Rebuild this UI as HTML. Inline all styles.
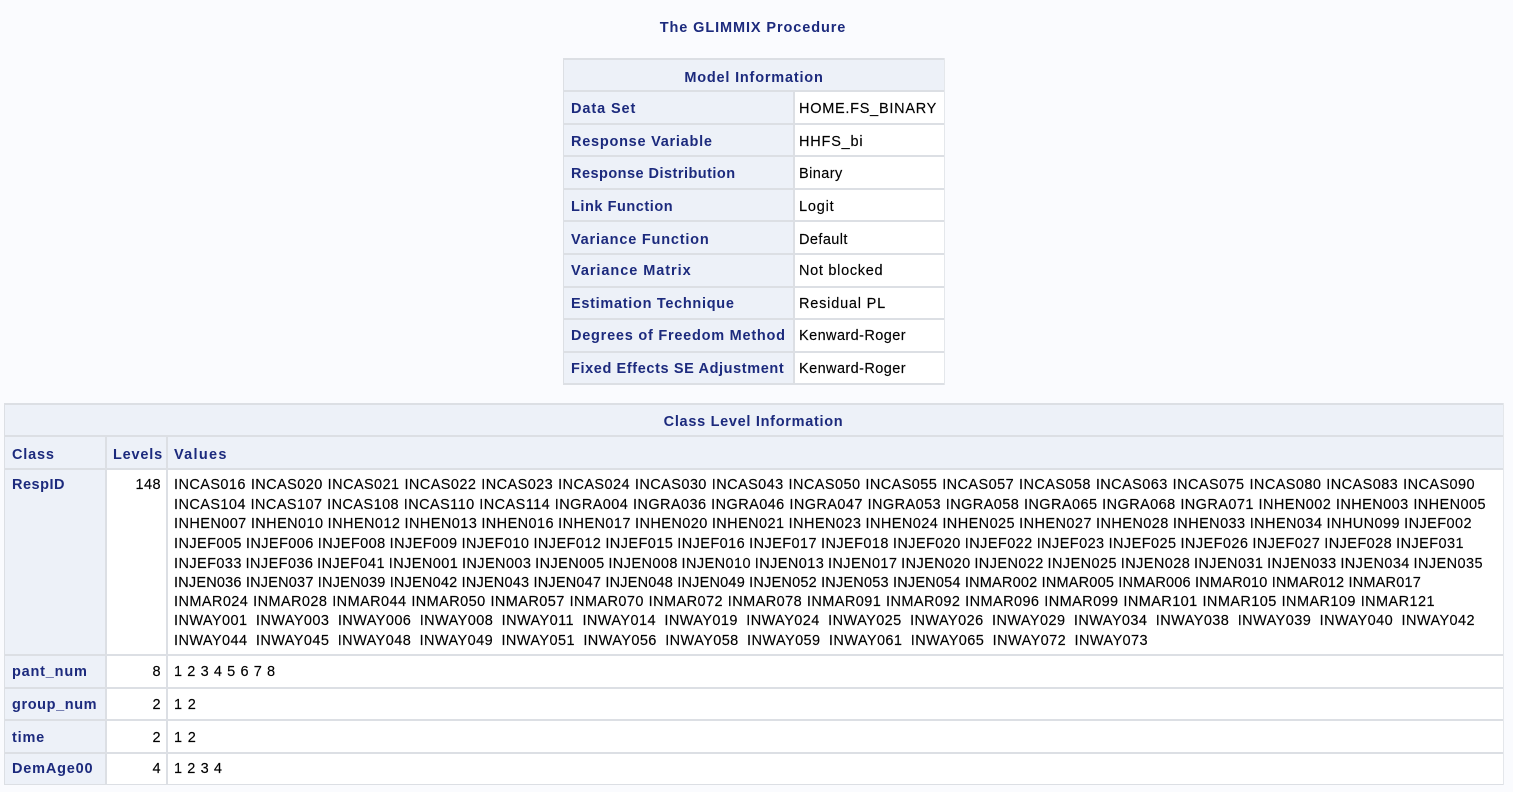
<!DOCTYPE html>
<html><head><meta charset="utf-8"><style>
html,body{margin:0;padding:0}
body{width:1513px;height:792px;position:relative;overflow:hidden;background:#fafbfe;font-family:"Liberation Sans",Arial,sans-serif}
.b{position:absolute}
.t{position:absolute;white-space:nowrap;font-size:14.5px;line-height:18px;height:18px;color:#000;letter-spacing:.42px;filter:blur(.35px);-webkit-text-stroke:.15px #000}
.h{font-weight:bold;color:#1c2a7d;font-size:14.5px;letter-spacing:.8px;-webkit-text-stroke:0}
.j{text-align:justify;text-align-last:justify;white-space:normal;word-spacing:-1px;letter-spacing:.42px}
.r{text-align:right}
.c{text-align:center}
.hd{background:#edf1f8}
.w{background:#fff}
.ln{background:#dcdfe4}
.lt{background:#e4e7eb}
</style></head><body>
<div class="t h c" style="left:553px;width:400px;top:19px;letter-spacing:.9px">The GLIMMIX Procedure</div>

<div class="b hd" style="left:563px;top:58px;width:381px;height:326px"></div>
<div class="b w" style="left:794px;top:91px;width:150px;height:293px"></div>
<div class="b ln" style="left:563px;top:58px;width:382px;height:2px"></div>
<div class="b ln" style="left:563px;top:90px;width:381px;height:2px"></div>
<div class="b ln" style="left:563px;top:123px;width:381px;height:2px"></div>
<div class="b ln" style="left:563px;top:155px;width:381px;height:2px"></div>
<div class="b ln" style="left:563px;top:188px;width:381px;height:2px"></div>
<div class="b ln" style="left:563px;top:220px;width:381px;height:2px"></div>
<div class="b ln" style="left:563px;top:253px;width:381px;height:2px"></div>
<div class="b ln" style="left:563px;top:286px;width:381px;height:2px"></div>
<div class="b ln" style="left:563px;top:318px;width:381px;height:2px"></div>
<div class="b ln" style="left:563px;top:351px;width:381px;height:2px"></div>
<div class="b ln" style="left:563px;top:383px;width:382px;height:2px"></div>
<div class="b ln" style="left:563px;top:58px;width:1px;height:327px"></div>
<div class="b ln" style="left:793px;top:91px;width:2px;height:293px"></div>
<div class="b lt" style="left:944px;top:58px;width:1px;height:327px"></div>

<div class="t h c" style="left:565px;width:378px;top:69px">Model Information</div>
<div class="t h" style="left:571px;top:100px;letter-spacing:.9px">Data Set</div><div class="t" style="left:799px;top:100px;letter-spacing:.73px">HOME.FS_BINARY</div>
<div class="t h" style="left:571px;top:133px;letter-spacing:.75px">Response Variable</div><div class="t" style="left:799px;top:133px;letter-spacing:.8px">HHFS_bi</div>
<div class="t h" style="left:571px;top:165px;letter-spacing:.47px">Response Distribution</div><div class="t" style="left:799px;top:165px">Binary</div>
<div class="t h" style="left:571px;top:198px;letter-spacing:.55px">Link Function</div><div class="t" style="left:799px;top:198px;letter-spacing:.8px">Logit</div>
<div class="t h" style="left:571px;top:231px">Variance Function</div><div class="t" style="left:799px;top:231px">Default</div>
<div class="t h" style="left:571px;top:262px;letter-spacing:.95px">Variance Matrix</div><div class="t" style="left:799px;top:262px;letter-spacing:.7px">Not blocked</div>
<div class="t h" style="left:571px;top:295px;letter-spacing:.7px">Estimation Technique</div><div class="t" style="left:799px;top:295px;letter-spacing:.8px">Residual PL</div>
<div class="t h" style="left:571px;top:327px;letter-spacing:.76px">Degrees of Freedom Method</div><div class="t" style="left:799px;top:327px">Kenward-Roger</div>
<div class="t h" style="left:571px;top:360px;letter-spacing:.61px">Fixed Effects SE Adjustment</div><div class="t" style="left:799px;top:360px">Kenward-Roger</div>

<div class="b hd" style="left:4px;top:404px;width:1499px;height:381px"></div>
<div class="b w" style="left:106px;top:470px;width:1397px;height:315px"></div>
<div class="b ln" style="left:4px;top:403px;width:1500px;height:2px"></div>
<div class="b ln" style="left:4px;top:435px;width:1499px;height:2px"></div>
<div class="b ln" style="left:4px;top:468px;width:1499px;height:2px"></div>
<div class="b ln" style="left:4px;top:654px;width:1499px;height:2px"></div>
<div class="b ln" style="left:4px;top:687px;width:1499px;height:2px"></div>
<div class="b ln" style="left:4px;top:719px;width:1499px;height:2px"></div>
<div class="b ln" style="left:4px;top:752px;width:1499px;height:2px"></div>
<div class="b ln" style="left:4px;top:784px;width:1500px;height:1px"></div>
<div class="b ln" style="left:4px;top:403px;width:1px;height:382px"></div>
<div class="b ln" style="left:105px;top:436px;width:2px;height:349px"></div>
<div class="b ln" style="left:166px;top:436px;width:2px;height:349px"></div>
<div class="b lt" style="left:1503px;top:403px;width:1px;height:382px"></div>

<div class="t h c" style="left:4px;width:1499px;top:413px;letter-spacing:.7px">Class Level Information</div>
<div class="t h" style="left:12px;top:446px">Class</div>
<div class="t h" style="left:113px;top:446px">Levels</div>
<div class="t h" style="left:174px;top:446px;letter-spacing:1.3px">Values</div>
<div class="t h" style="left:12px;top:476px;letter-spacing:.5px">RespID</div>
<div class="t r" style="left:110px;width:51px;top:476px">148</div>

<div class="t j" style="left:174px;top:476px;width:1301px">INCAS016 INCAS020 INCAS021 INCAS022 INCAS023 INCAS024 INCAS030 INCAS043 INCAS050 INCAS055 INCAS057 INCAS058 INCAS063 INCAS075 INCAS080 INCAS083 INCAS090</div>
<div class="t j" style="left:174px;top:496px;width:1312px">INCAS104 INCAS107 INCAS108 INCAS110 INCAS114 INGRA004 INGRA036 INGRA046 INGRA047 INGRA053 INGRA058 INGRA065 INGRA068 INGRA071 INHEN002 INHEN003 INHEN005</div>
<div class="t j" style="left:174px;top:515px;width:1298px">INHEN007 INHEN010 INHEN012 INHEN013 INHEN016 INHEN017 INHEN020 INHEN021 INHEN023 INHEN024 INHEN025 INHEN027 INHEN028 INHEN033 INHEN034 INHUN099 INJEF002</div>
<div class="t j" style="left:174px;top:535px;width:1290px">INJEF005 INJEF006 INJEF008 INJEF009 INJEF010 INJEF012 INJEF015 INJEF016 INJEF017 INJEF018 INJEF020 INJEF022 INJEF023 INJEF025 INJEF026 INJEF027 INJEF028 INJEF031</div>
<div class="t j" style="left:174px;top:555px;width:1309px">INJEF033 INJEF036 INJEF041 INJEN001 INJEN003 INJEN005 INJEN008 INJEN010 INJEN013 INJEN017 INJEN020 INJEN022 INJEN025 INJEN028 INJEN031 INJEN033 INJEN034 INJEN035</div>
<div class="t j" style="left:174px;top:574px;width:1247px;letter-spacing:.2px;word-spacing:-2px">INJEN036 INJEN037 INJEN039 INJEN042 INJEN043 INJEN047 INJEN048 INJEN049 INJEN052 INJEN053 INJEN054 INMAR002 INMAR005 INMAR006 INMAR010 INMAR012 INMAR017</div>
<div class="t j" style="left:174px;top:593px;width:1261px">INMAR024 INMAR028 INMAR044 INMAR050 INMAR057 INMAR070 INMAR072 INMAR078 INMAR091 INMAR092 INMAR096 INMAR099 INMAR101 INMAR105 INMAR109 INMAR121</div>
<div class="t j" style="left:174px;top:612px;width:1301px">INWAY001 INWAY003 INWAY006 INWAY008 INWAY011 INWAY014 INWAY019 INWAY024 INWAY025 INWAY026 INWAY029 INWAY034 INWAY038 INWAY039 INWAY040 INWAY042</div>
<div class="t j" style="left:174px;top:632px;width:974px">INWAY044 INWAY045 INWAY048 INWAY049 INWAY051 INWAY056 INWAY058 INWAY059 INWAY061 INWAY065 INWAY072 INWAY073</div>

<div class="t h" style="left:12px;top:663px">pant_num</div><div class="t r" style="left:110px;width:51px;top:663px">8</div><div class="t" style="left:174px;top:663px;letter-spacing:.6px">1 2 3 4 5 6 7 8</div>
<div class="t h" style="left:12px;top:696px;letter-spacing:.6px">group_num</div><div class="t r" style="left:110px;width:51px;top:696px">2</div><div class="t" style="left:174px;top:696px;letter-spacing:.8px">1 2</div>
<div class="t h" style="left:12px;top:729px">time</div><div class="t r" style="left:110px;width:51px;top:729px">2</div><div class="t" style="left:174px;top:729px;letter-spacing:.8px">1 2</div>
<div class="t h" style="left:12px;top:760px">DemAge00</div><div class="t r" style="left:110px;width:51px;top:760px">4</div><div class="t" style="left:174px;top:760px;letter-spacing:.6px">1 2 3 4</div>
</body></html>
